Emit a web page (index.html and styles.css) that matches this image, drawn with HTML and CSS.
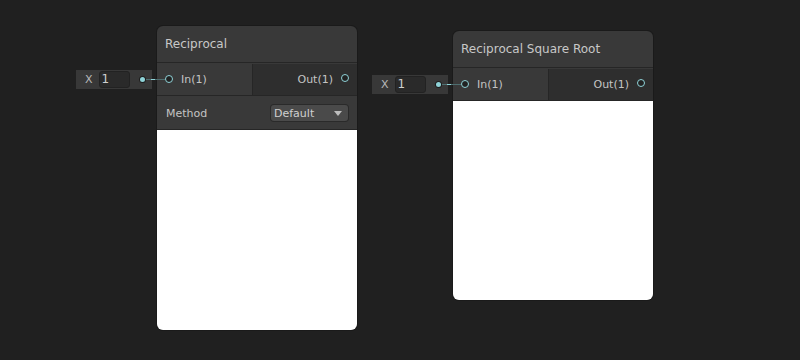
FILE: index.html
```html
<!DOCTYPE html>
<html lang="en">
<head>
    <meta charset="UTF-8">
    <title>Shader Graph Nodes</title>
    <link rel="stylesheet" href="styles.css">
</head>
<body>
    <div class="canvas">

        <!-- Reciprocal node -->
        <div class="node node-a">
            <div class="node-title">Reciprocal</div>
            <div class="ports">
                <div class="port-in"><span class="port"></span>In(1)</div>
                <div class="port-out">Out(1)<span class="port"></span></div>
            </div>
            <div class="control-row">
                <span>Method</span>
                <div class="dropdown">Default<span class="caret"></span></div>
            </div>
            <div class="preview"></div>
        </div>
        <div class="field field-a">
            <span class="field-label">X</span>
            <span class="field-input">1</span>
            <span class="field-dot"></span>
            <span class="wire"></span>
        </div>

        <!-- Reciprocal Square Root node -->
        <div class="node node-b">
            <div class="node-title">Reciprocal Square Root</div>
            <div class="ports">
                <div class="port-in"><span class="port"></span>In(1)</div>
                <div class="port-out">Out(1)<span class="port"></span></div>
            </div>
            <div class="preview"></div>
        </div>
        <div class="field field-b">
            <span class="field-label">X</span>
            <span class="field-input">1</span>
            <span class="field-dot"></span>
            <span class="wire"></span>
        </div>

    </div>
</body>
</html>
```

FILE: styles.css
```css
body {
    margin: 0;
    background: #202020;
    font-family: "DejaVu Sans", sans-serif;
    font-size: 11px;
    color: #c4c4c4;
}
.canvas {
    position: relative;
    width: 800px;
    height: 360px;
    overflow: hidden;
}

/* nodes */
.node {
    position: absolute;
    width: 200px;
    display: flex;
    flex-direction: column;
    background: #393939;
    border-radius: 6px;
    overflow: hidden;
    box-shadow: 0 0 0 1px #1a1a1a;
}
.node-a {
    left: 157px;
    top: 26px;
    height: 304px;
}
.node-b {
    left: 453px;
    top: 31px;
    height: 269px;
}
.node-title {
    height: 36px;
    line-height: 36px;
    padding-left: 8px;
    font-size: 12px;
    color: #c8c8c8;
    border-bottom: 1px solid #262626;
}
.ports {
    display: flex;
    height: 31px;
    padding-top: 1px;
    border-bottom: 1px solid #262626;
}
.port-in {
    width: 95px;
    display: flex;
    align-items: center;
    background: #393939;
    border-right: 1px solid #262626;
}
.port-in .port {
    margin: -2px 8px 0 8px;
}
.port-out {
    flex: 1;
    display: flex;
    align-items: center;
    justify-content: flex-end;
    background: #2e2e2e;
}
.port-out .port {
    margin: -3px 8px 0 8px;
}
.port {
    width: 6px;
    height: 6px;
    border: 1.5px solid #8fd3d8;
    border-radius: 50%;
    background: #222;
}
.control-row {
    height: 32px;
    display: flex;
    align-items: center;
    justify-content: space-between;
    padding: 1px 9px 0 9px;
    border-bottom: 1px solid #262626;
}
.dropdown {
    width: 68px;
    height: 16px;
    display: flex;
    align-items: center;
    justify-content: space-between;
    padding: 0 6px 0 3px;
    background: #4a4a4a;
    border-radius: 3px;
    box-shadow: 0 0 0 1px #2a2a2a;
    color: #d0d0d0;
}
.caret {
    width: 0;
    height: 0;
    border-left: 4px solid transparent;
    border-right: 4px solid transparent;
    border-top: 5px solid #bdbdbd;
}
.preview {
    flex: 1;
    background: #fff;
}

/* input fields attached to ports */
.field {
    position: absolute;
    width: 76px;
    height: 19px;
    display: flex;
    align-items: center;
    background: #383838;
}
.field-a {
    left: 76px;
    top: 70px;
}
.field-b {
    left: 372px;
    top: 75px;
}
.field-label {
    margin: 0 0 0 9px;
    color: #b8b8b8;
}
.field-input {
    width: 27px;
    height: 15px;
    line-height: 15px;
    margin-left: 6px;
    padding-left: 2px;
    background: #2a2a2a;
    border: 1px solid #222;
    border-radius: 3px;
    color: #d0d0d0;
    font-size: 12px;
}
.field-dot {
    position: absolute;
    left: 64px;
    top: 7px;
    width: 5px;
    height: 5px;
    border-radius: 50%;
    background: #8fd3d8;
    box-shadow: 0 0 0 1px #1e1e1e;
}
.wire {
    position: absolute;
    left: 70px;
    top: 9px;
    width: 19px;
    height: 1px;
    background: linear-gradient(to right, #4e6e70 0 5px, #8fd3d8 5px 9px, #4e6e70 9px);
}
```
